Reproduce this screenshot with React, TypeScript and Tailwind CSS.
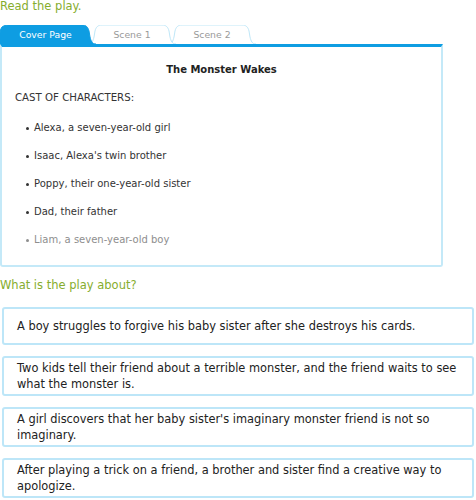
const FONT = "font-['DejaVu_Sans',Verdana,sans-serif]";

const cast = [
  { name: "Alexa, a seven-year-old girl", faded: false },
  { name: "Isaac, Alexa's twin brother", faded: false },
  { name: "Poppy, their one-year-old sister", faded: false },
  { name: "Dad, their father", faded: false },
  { name: "Liam, a seven-year-old boy", faded: true }
];

const answers = [
  "A boy struggles to forgive his baby sister after she destroys his cards.",
  "Two kids tell their friend about a terrible monster, and the friend waits to see what the monster is.",
  "A girl discovers that her baby sister's imaginary monster friend is not so imaginary.",
  "After playing a trick on a friend, a brother and sister find a creative way to apologize."
];

// Tab outline: curved sides with a small foot at the bottom, like a folder tab.
function tabPath(width: number, squareLeft: boolean): string {
  const w = width;
  const left = squareLeft
    ? "M0,19 L0,8 Q0,0 8,0"
    : "M0,19 C4,19 5,16 6,12 L7,6 C8,2 10,0 14,0";
  return `${left} L${w - 14},0 C${w - 10},0 ${w - 8},2 ${w - 7},6 L${w - 6},12 C${w - 5},16 ${w - 4},19 ${w},19`;
}

function Tab({
  label,
  width,
  active = false,
  className
}: {
  label: string;
  width: number;
  active?: boolean;
  className?: string;
}): React.JSX.Element {
  return (
    <div
      className={`relative flex h-[19px] shrink-0 items-center justify-center ${className ?? ""}`}
      style={{ width }}
    >
      <svg
        className="absolute inset-0"
        width={width}
        height={19}
        viewBox={`0 0 ${width} 19`}
        aria-hidden="true"
      >
        <path
          d={tabPath(width, active)}
          fill={active ? "#0e9de2" : "#ffffff"}
          stroke={active ? "#0e9de2" : "#bfe7f8"}
          strokeWidth={1}
        />
      </svg>
      <span
        className={`relative text-[9.3px] leading-[11px] ${
          active ? "pr-[5px] text-white" : "text-[#9a9a9a]"
        }`}
      >
        {label}
      </span>
    </div>
  );
}

export default function App(): React.JSX.Element {
  return (
    <div className={`w-[476px] bg-white text-[#333333] ${FONT}`}>
      <h2 className="text-[11.5px] leading-[13px] text-[#86ad2e]">
        Read the play.
      </h2>

      <div className="mt-[12px] flex">
        <Tab label="Cover Page" width={96} active className="z-30" />
        <Tab label="Scene 1" width={88} className="z-20 -ml-[8px]" />
        <Tab label="Scene 2" width={88} className="z-10 -ml-[8px]" />
      </div>

      <div className="w-[443px] rounded-b-[3px] border-2 border-t-[3px] border-[#c4e9f8] border-t-[#0e9de2] pb-[19px] pl-[13px] pt-[17px]">
        <p className="pr-[13px] text-center text-[10px] font-bold leading-[12px] text-[#222222]">
          The Monster Wakes
        </p>
        <p className="mt-[16px] text-[10.2px] leading-[12px]">
          CAST OF CHARACTERS:
        </p>
        <ul className="mt-[18px] flex flex-col gap-[16px] pl-[11px] text-[10px] leading-[12px]">
          {cast.map((item) => (
            <li
              key={item.name}
              className={`flex items-center gap-[5px] ${
                item.faded ? "text-[#8e8e8e]" : "text-[#333333]"
              }`}
            >
              <span className="h-[3px] w-[3px] shrink-0 rounded-full bg-current" />
              {item.name}
            </li>
          ))}
        </ul>
      </div>

      <h2 className="mt-[12px] text-[11.5px] leading-[13px] text-[#86ad2e]">
        What is the play about?
      </h2>

      <div className="ml-[2px] mt-[15px] flex w-[472px] flex-col gap-[11px]">
        {answers.map((answer) => (
          <div
            key={answer}
            className="flex min-h-[38px] items-center rounded-[3px] border-2 border-[#bde6f8] py-[2px] pl-[13px] pr-[12px] text-[11.4px] leading-[16px] text-[#222222]"
          >
            {answer}
          </div>
        ))}
      </div>
    </div>
  );
}
